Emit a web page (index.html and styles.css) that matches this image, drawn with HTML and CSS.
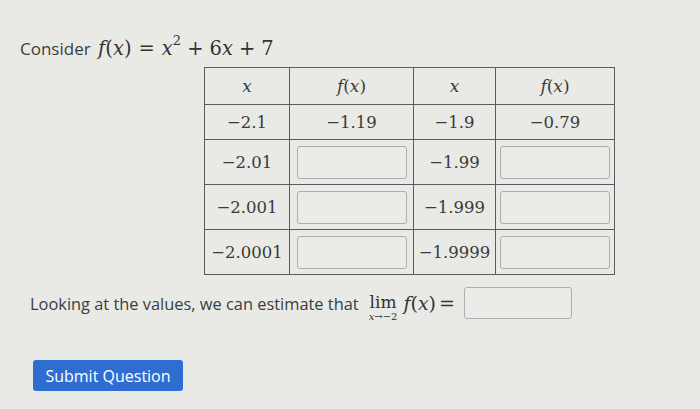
FILE: index.html
```html
<!DOCTYPE html>
<html>
<head>
<meta charset="utf-8">
<link rel="stylesheet" href="styles.css">
</head>
<body>
<div class="page">
  <p class="prompt">Consider <span class="math"><i>f</i>(<i>x</i>)<span class="rel">=</span><i>x</i><sup>2</sup><span class="bin">+</span>6<i>x</i><span class="bin">+</span>7</span></p>
  <table class="vals">
    <tr class="head">
      <td class="c1"><i>x</i></td>
      <td class="c2"><i>f</i>(<i>x</i>)</td>
      <td class="c3"><i>x</i></td>
      <td class="c4"><i>f</i>(<i>x</i>)</td>
    </tr>
    <tr class="r1">
      <td>−2.1</td><td>−1.19</td><td>−1.9</td><td>−0.79</td>
    </tr>
    <tr class="rin">
      <td>−2.01</td><td><div class="box"></div></td><td>−1.99</td><td><div class="box"></div></td>
    </tr>
    <tr class="rin">
      <td>−2.001</td><td><div class="box"></div></td><td>−1.999</td><td><div class="box"></div></td>
    </tr>
    <tr class="rin">
      <td>−2.0001</td><td><div class="box"></div></td><td>−1.9999</td><td><div class="box"></div></td>
    </tr>
  </table>
  <div class="estimate">
    <span class="lead">Looking at the values, we can estimate that</span>
    <span class="lim"><span class="limw">lim</span><span class="sub"><i>x</i>→−2</span></span>
    <span class="math fx"><i>f</i>(<i>x</i>)<span class="rel">=</span></span>
    <div class="box wide"></div>
  </div>
  <button class="submit">Submit Question</button>
</div>
</body>
</html>
```

FILE: styles.css
```css
html, body {
  margin: 0;
  padding: 0;
  background: #e9eae6;
}
.page {
  width: 700px;
  height: 409px;
  display: flex;
  flex-direction: column;
  align-items: flex-start;
  font-family: "Open Sans", sans-serif;
  color: #3b3d3f;
}
.prompt {
  margin: 36px 0 0 20px;
  font-size: 17px;
  line-height: 26px;
  height: 26px;
}
.math {
  font-family: "DejaVu Serif", serif;
  font-size: 19.5px;
  color: #333;
  margin-left: 3px;
}
.math sup {
  font-size: 13px;
  line-height: 0;
  vertical-align: 10px;
}
.rel {
  margin: 0 7px;
}
.bin {
  margin: 0 6px;
}
.vals {
  margin: 5px 0 0 204px;
  border-collapse: collapse;
  font-family: "DejaVu Serif", serif;
  font-size: 16.5px;
  color: #3a3a3a;
}
.vals td {
  border: 1.5px solid #585c60;
  text-align: center;
  padding: 0 4px;
}
.c1 { width: 76px; }
.c2 { width: 115px; }
.c3 { width: 73px; }
.c4 { width: 109px; }
.head td { height: 36px; font-size: 17px; }
.r1 td { height: 34px; }
.rin td { height: 44px; }
.box {
  width: 110px;
  height: 33px;
  border: 1px solid #a8aeb2;
  border-radius: 3px;
  background: #ebece8;
  margin: 0 auto;
  box-sizing: border-box;
}
.estimate {
  display: flex;
  align-items: center;
  margin: 12px 0 0 30px;
  height: 32px;
}
.lead {
  font-size: 16.4px;
  color: #3b3d3f;
}
.lim {
  display: inline-flex;
  flex-direction: column;
  align-items: center;
  gap: 2px;
  margin-left: 10px;
  font-family: "DejaVu Serif", serif;
  color: #333;
  position: relative;
  top: 5px;
}
.limw {
  font-size: 17px;
  line-height: 15px;
}
.sub {
  font-size: 10px;
  line-height: 10px;
  white-space: nowrap;
}
.fx {
  margin-left: 6px;
  font-size: 19px;
}
.fx .rel {
  margin: 0 0 0 3px;
}
.box.wide {
  width: 108px;
  height: 32px;
  margin: 0 0 0 9px;
}
.submit {
  margin: 41px 0 0 33px;
  width: 150px;
  height: 31px;
  background: #2f6dd0;
  color: #fff;
  border: none;
  border-radius: 3px;
  font-family: "Open Sans", sans-serif;
  font-size: 16px;
  padding: 0;
}
```
